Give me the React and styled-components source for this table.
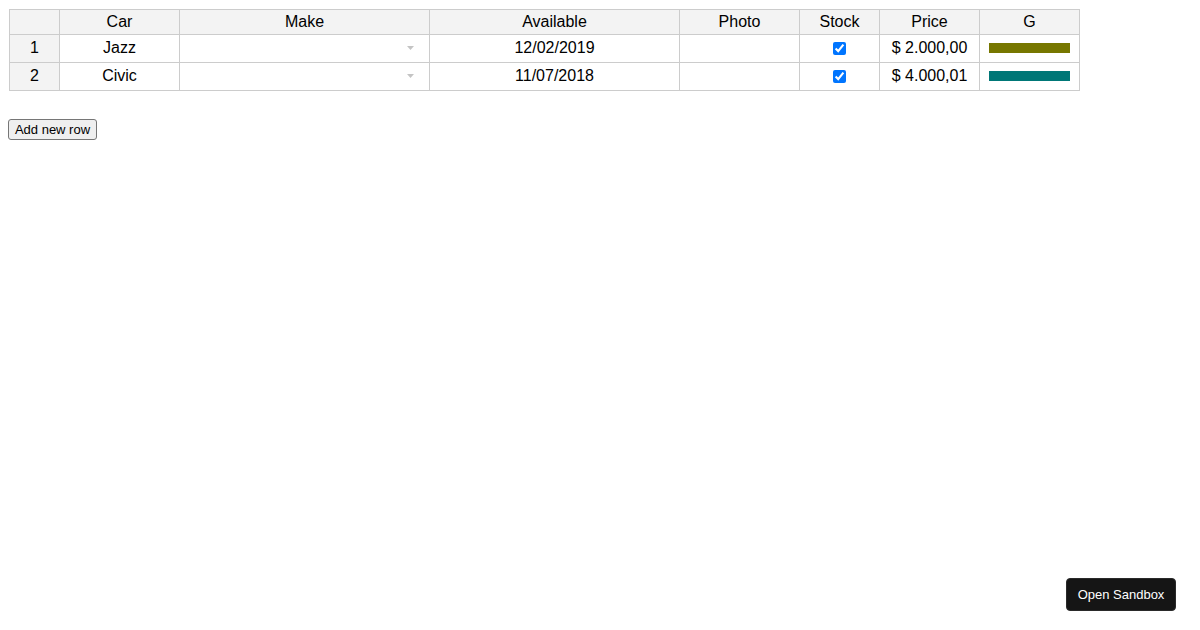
import React, { useState } from "react";
import styled, { createGlobalStyle } from "styled-components";

const GlobalStyle = createGlobalStyle`
  body {
    margin: 8px;
    font-family: "Liberation Sans", Arial, sans-serif;
    background: #fff;
    color: #000;
  }
`;

const columns = [
  { title: "Car", width: 120 },
  { title: "Make", width: 250 },
  { title: "Available", width: 250 },
  { title: "Photo", width: 120 },
  { title: "Stock", width: 80 },
  { title: "Price", width: 100 },
  { title: "G", width: 100 },
];

const initialRows = [
  { car: "Jazz", available: "12/02/2019", stock: true, price: "$ 2.000,00", color: "#777700" },
  { car: "Civic", available: "11/07/2018", stock: true, price: "$ 4.000,01", color: "#007777" },
];

const SheetWrap = styled.div`
  padding: 1px 0 0 1px;
`;

const Sheet = styled.table`
  border-collapse: separate;
  border-spacing: 0;
  table-layout: fixed;
  width: 0;
  border-top: 1px solid #ccc;
  border-left: 1px solid #ccc;
  font-size: 16px;
`;

const HeadCell = styled.td`
  box-sizing: border-box;
  width: ${(p) => p.$w}px;
  height: 25px;
  padding: 0 2px;
  background: #f3f3f3;
  border-right: 1px solid #ccc;
  border-bottom: 1px solid #ccc;
  text-align: center;
  vertical-align: middle;
  white-space: nowrap;
  overflow: hidden;
`;

const IndexCell = styled.td`
  box-sizing: border-box;
  height: 28px;
  padding: 0 4px 1px;
  background: #f3f3f3;
  border-right: 1px solid #ccc;
  border-bottom: 1px solid #ccc;
  text-align: center;
  vertical-align: middle;
`;

const Cell = styled.td`
  box-sizing: border-box;
  height: 28px;
  padding: 0 4px 1px;
  border-right: 1px solid #ccc;
  border-bottom: 1px solid #ccc;
  text-align: center;
  vertical-align: middle;
  white-space: nowrap;
  overflow: hidden;
  line-height: 1em;
`;

const DropdownBox = styled.div`
  display: flex;
  justify-content: flex-end;
  align-items: center;
  padding-right: 11px;
  height: 100%;
`;

const Check = styled.input`
  display: block;
  margin: 0 auto;
  width: 13px;
  height: 13px;
`;

const Bar = styled.div`
  width: 81px;
  height: 10px;
  margin-left: 5px;
  background: ${(p) => p.$color};
`;

const AddButton = styled.button`
  margin-top: 28px;
  width: 89px;
  height: 21px;
  padding: 1px 0;
  font-family: "Liberation Sans", Arial, sans-serif;
  font-size: 13px;
  color: #000;
  background: #efefef;
  border: 1px solid #767676;
  border-radius: 3px;
  cursor: default;
`;

const SandboxButton = styled.button`
  position: fixed;
  right: 24px;
  bottom: 19px;
  width: 110px;
  height: 33px;
  padding: 0;
  font-family: "Liberation Sans", Arial, sans-serif;
  font-size: 13px;
  color: #fff;
  background: #151515;
  border: 1px solid #2a2a2a;
  border-radius: 4px;
`;

const DropArrow = () => (
  <svg width="7" height="4" viewBox="0 0 7 4">
    <path d="M0 0h7L3.5 4z" fill="#c4c4c4" />
  </svg>
);

export default function App() {
  const [rows, setRows] = useState(initialRows);

  const addRow = () =>
    setRows((r) => [...r, { car: "", available: "", stock: false, price: "", color: "transparent" }]);

  return (
    <>
      <GlobalStyle />
      <SheetWrap>
        <Sheet>
          <thead>
            <tr>
              <HeadCell $w={50} />
              {columns.map((c) => (
                <HeadCell key={c.title} $w={c.width}>
                  {c.title}
                </HeadCell>
              ))}
            </tr>
          </thead>
          <tbody>
            {rows.map((row, i) => (
              <tr key={i}>
                <IndexCell>{i + 1}</IndexCell>
                <Cell>{row.car}</Cell>
                <Cell>
                  <DropdownBox>
                    <DropArrow />
                  </DropdownBox>
                </Cell>
                <Cell>{row.available}</Cell>
                <Cell />
                <Cell>
                  <Check type="checkbox" checked={row.stock} readOnly />
                </Cell>
                <Cell>{row.price}</Cell>
                <Cell>
                  <Bar $color={row.color} />
                </Cell>
              </tr>
            ))}
          </tbody>
        </Sheet>
      </SheetWrap>
      <AddButton onClick={addRow}>Add new row</AddButton>
      <SandboxButton>Open Sandbox</SandboxButton>
    </>
  );
}
